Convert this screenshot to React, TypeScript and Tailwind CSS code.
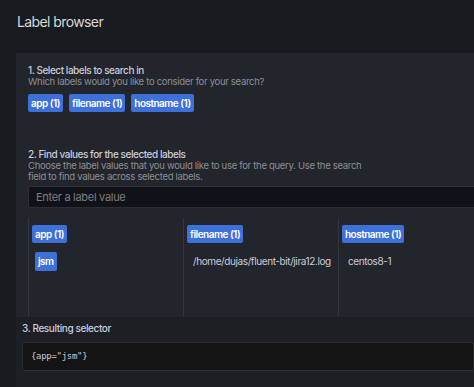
import React from "react";

const Chip = ({ children, className = "" }: { children: React.ReactNode; className?: string }) => (
  <span
    className={`inline-flex items-center h-[18px] px-[3px] rounded-[2px] bg-[#3d71d9] text-white text-[10px] tracking-[-0.5px] font-semibold ${className}`}
  >
    {children}
  </span>
);

const columns = [
  { label: "app (1)", value: "jsm", selected: true },
  { label: "filename (1)", value: "/home/dujas/fluent-bit/jira12.log", selected: false },
  { label: "hostname (1)", value: "centos8-1", selected: false },
];

export default function App() {
  return (
    <div className="w-[474px] h-[387px] overflow-hidden bg-[#181b1f] font-['Inter',sans-serif]">
      <div className="h-[53px] pl-[17px] pt-[12px] text-[14px] tracking-[-0.6px] leading-[20px] text-[#d8d9da]">
        Label browser
      </div>

      <div className="ml-4 w-[600px] h-[264px] bg-[#22252b] pl-3 pt-[11px]">
        {/* 1 */}
        <div className="text-[10px] tracking-[-0.45px] leading-[12px] font-medium text-[#ccccdc]">
          1. Select labels to search in
        </div>
        <div className="text-[9.5px] tracking-[-0.3px] leading-[12px] text-[#8e8f96]">
          Which labels would you like to consider for your search?
        </div>
        <div className="mt-[6px] flex gap-[6px]">
          <Chip>app (1)</Chip>
          <Chip>filename (1)</Chip>
          <Chip>hostname (1)</Chip>
        </div>

        {/* 2 */}
        <div className="mt-[36px] text-[10px] tracking-[-0.45px] leading-[12px] font-medium text-[#ccccdc]">
          2. Find values for the selected labels
        </div>
        <div className="w-[346px] text-[9.5px] tracking-[-0.3px] leading-[11px] text-[#8e8f96]">
          Choose the label values that you would like to use for the query. Use the search field to find values across
          selected labels.
        </div>
        <div className="mt-[4px] h-[22px] flex items-center pl-[7px] bg-[#111217] border border-[#2c2f35] rounded-[2px] text-[11px] tracking-[-0.3px] text-[#7d7e85]">
          Enter a label value
        </div>

        <div className="mt-[10px] flex h-[99px]">
          {columns.map((c) => (
            <div
              key={c.label}
              className="w-[155px] shrink-0 flex flex-col items-start border-l border-[#33363c] pl-[3px] pt-[7px]"
            >
              <Chip>{c.label}</Chip>
              <div className="mt-[9px] ml-[3px] flex">
                {c.selected ? (
                  <Chip className="h-[19px]">{c.value}</Chip>
                ) : (
                  <span className="flex items-center h-[19px] px-[3px] text-[10px] tracking-[-0.4px] text-[#ccccdc]">
                    {c.value}
                  </span>
                )}
              </div>
            </div>
          ))}
        </div>
      </div>

      {/* 3 */}
      <div className="ml-4 h-[70px] bg-[#1c1f24] pl-[6px] pt-[5px]">
        <div className="text-[10px] tracking-[-0.4px] leading-[12px] font-medium text-[#ccccdc]">3. Resulting selector</div>
        <div className="mt-[8px] h-[29px] flex items-center pl-[8px] bg-[#141414] border border-[#2c2e33] rounded-[2px] font-['DejaVu_Sans_Mono',monospace] text-[9px] tracking-[-0.3px] text-[#ccccdc]">
          {'{app="jsm"}'}
        </div>
      </div>
    </div>
  );
}
